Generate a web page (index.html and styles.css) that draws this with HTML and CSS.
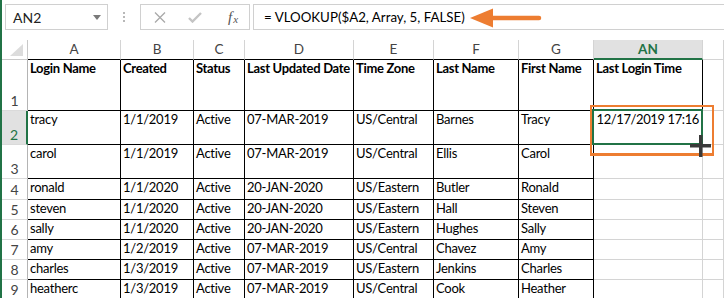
FILE: index.html
```html
<!DOCTYPE html>
<html lang="en">
<head>
<meta charset="utf-8">
<title>VLOOKUP</title>
<link rel="stylesheet" href="styles.css">
</head>
<body>
<div class="toolbar">
  <div class="namebox">
    <span class="nb-text">AN2</span>
    <svg class="nb-caret" width="8" height="5" viewBox="0 0 8 5"><path d="M0 0H8L4 5Z" fill="#7a7a7a"/></svg>
  </div>
  <div class="grip"><i></i><i></i><i></i></div>
  <div class="fbtns">
    <span class="fb"><svg width="12" height="11" viewBox="0 0 12 11"><path d="M1 0.5L11 10.5M11 0.5L1 10.5" stroke="#a9a9a9" stroke-width="1.3" fill="none"/></svg></span>
    <span class="fb"><svg width="14" height="11" viewBox="0 0 14 11"><path d="M1 6L4.5 9.5L13 1" stroke="#c4c4c4" stroke-width="2.4" fill="none"/></svg></span>
    <span class="fb fx">f<span class="fx-x">x</span></span>
  </div>
  <div class="formula">
    <span class="ftext">= VLOOKUP($A2, Array, 5, FALSE)</span>
    <svg class="arrow" width="72" height="20" viewBox="0 0 72 20"><path d="M0 10L23 0.5V19.5Z" fill="#ed7d31"/><path d="M21 10H69" stroke="#ed7d31" stroke-width="4.5" stroke-linecap="round"/></svg>
  </div>
</div>

<div class="sheet">
  <div class="corner"><svg class="tri" width="13" height="12" viewBox="0 0 13 12"><path d="M13 0V12H0Z" fill="#dcdcdc"/></svg></div>
  <div class="ch">A</div>
  <div class="ch">B</div>
  <div class="ch">C</div>
  <div class="ch">D</div>
  <div class="ch">E</div>
  <div class="ch">F</div>
  <div class="ch">G</div>
  <div class="ch ch-sel">AN</div>
  <div class="ch ch-end"></div>

  <div class="rh">1</div>
  <div class="c b">Login Name</div>
  <div class="c b">Created</div>
  <div class="c b">Status</div>
  <div class="c b">Last Updated Date</div>
  <div class="c b">Time Zone</div>
  <div class="c b">Last Name</div>
  <div class="c b">First Name</div>
  <div class="c b">Last Login Time</div>
  <div class="e"></div>

  <div class="rh rh-sel">2</div>
  <div class="c">tracy</div>
  <div class="c">1/1/2019</div>
  <div class="c">Active</div>
  <div class="c">07-MAR-2019</div>
  <div class="c">US/Central</div>
  <div class="c">Barnes</div>
  <div class="c">Tracy</div>
  <div class="e active">
    <span class="num">12/17/2019 17:16</span>
    <span class="selbox"></span>
    <span class="highlight"></span>
    <svg class="cursor" width="21" height="22" viewBox="0 0 21 22"><rect x="9" y="0" width="3.5" height="22" fill="#3a3a3a"/><rect x="0" y="9" width="21" height="3.5" fill="#3a3a3a"/></svg>
  </div>
  <div class="e"></div>

  <div class="rh">3</div>
  <div class="c">carol</div>
  <div class="c">1/1/2019</div>
  <div class="c">Active</div>
  <div class="c">07-MAR-2019</div>
  <div class="c">US/Central</div>
  <div class="c">Ellis</div>
  <div class="c">Carol</div>
  <div class="e"></div>
  <div class="e"></div>

  <div class="rh">4</div>
  <div class="c">ronald</div>
  <div class="c">1/1/2020</div>
  <div class="c">Active</div>
  <div class="c">20-JAN-2020</div>
  <div class="c">US/Eastern</div>
  <div class="c">Butler</div>
  <div class="c">Ronald</div>
  <div class="e"></div>
  <div class="e"></div>

  <div class="rh">5</div>
  <div class="c">steven</div>
  <div class="c">1/1/2020</div>
  <div class="c">Active</div>
  <div class="c">20-JAN-2020</div>
  <div class="c">US/Eastern</div>
  <div class="c">Hall</div>
  <div class="c">Steven</div>
  <div class="e"></div>
  <div class="e"></div>

  <div class="rh">6</div>
  <div class="c">sally</div>
  <div class="c">1/1/2020</div>
  <div class="c">Active</div>
  <div class="c">20-JAN-2020</div>
  <div class="c">US/Eastern</div>
  <div class="c">Hughes</div>
  <div class="c">Sally</div>
  <div class="e"></div>
  <div class="e"></div>

  <div class="rh">7</div>
  <div class="c">amy</div>
  <div class="c">1/2/2019</div>
  <div class="c">Active</div>
  <div class="c">07-MAR-2019</div>
  <div class="c">US/Central</div>
  <div class="c">Chavez</div>
  <div class="c">Amy</div>
  <div class="e"></div>
  <div class="e"></div>

  <div class="rh">8</div>
  <div class="c">charles</div>
  <div class="c">1/3/2019</div>
  <div class="c">Active</div>
  <div class="c">07-MAR-2019</div>
  <div class="c">US/Eastern</div>
  <div class="c">Jenkins</div>
  <div class="c">Charles</div>
  <div class="e"></div>
  <div class="e"></div>

  <div class="rh">9</div>
  <div class="c">heatherc</div>
  <div class="c">1/3/2019</div>
  <div class="c">Active</div>
  <div class="c">07-MAR-2019</div>
  <div class="c">US/Central</div>
  <div class="c">Cook</div>
  <div class="c">Heather</div>
  <div class="e"></div>
  <div class="e"></div>
</div>
</body>
</html>
```
FILE: styles.css
```css
* { box-sizing: border-box; }

html, body { height: 100%; }

body {
  margin: 0;
  border-left: 2px solid #217346;
  background: #fff;
  overflow: hidden;
  font-family: Lato, "Liberation Sans", sans-serif;
  color: #000;
}

/* ---------- formula bar ---------- */
.toolbar {
  display: flex;
  align-items: flex-start;
  height: 40px;
  padding-top: 4px;
}

.namebox {
  margin-left: 3px;
  width: 103px;
  height: 26px;
  border: 1px solid #d0d0d0;
  display: flex;
  align-items: center;
  justify-content: space-between;
  padding: 0 6px 0 7px;
  font-size: 14px;
  color: #222;
}

.nb-caret { margin-top: 1px; }

.grip {
  width: 32px;
  height: 26px;
  display: flex;
  flex-direction: column;
  align-items: center;
  justify-content: center;
  gap: 2px;
}

.grip i {
  display: block;
  width: 2px;
  height: 2px;
  background: #b8b8b8;
}

.fbtns {
  width: 110px;
  height: 26px;
  border: 1px solid #d0d0d0;
  display: flex;
  align-items: center;
}

.fb {
  width: 36px;
  display: flex;
  justify-content: center;
  align-items: center;
}

.fb:first-child { padding-left: 2px; }

.fx {
  font-family: "Liberation Serif", serif;
  font-style: italic;
  font-size: 15px;
  color: #555;
  padding-left: 4px;
}

.fx-x { font-size: 11px; margin-top: 4px; margin-left: 1px; }

.formula {
  flex: 1;
  margin-left: 3px;
  height: 26px;
  border: 1px solid #d0d0d0;
  border-right: none;
  display: flex;
  align-items: center;
  padding-left: 10px;
  font-size: 13.3px;
  color: #000;
}

.ftext { white-space: nowrap; }

.arrow { margin-left: 5px; margin-top: 1px; flex: none; }

/* ---------- sheet ---------- */
.sheet {
  display: grid;
  grid-template-columns: 26px 93px 73px 51px 109px 80px 85px 75px 109px 1fr;
  grid-template-rows: 20px 51px 34px 34px 21px 20px 20px 20px 20px 20px;
  font-size: 13px;
  line-height: 15px;
}

.sheet > div {
  border-right: 1px solid #d4d4d4;
  border-bottom: 1px solid #d4d4d4;
  white-space: nowrap;
  overflow: visible;
}

.corner {
  position: relative;
  border-right-color: #c8c8c8 !important;
  border-bottom-color: #c8c8c8 !important;
}

.tri { position: absolute; right: 4px; bottom: 3px; }

.ch {
  display: flex;
  align-items: center;
  justify-content: center;
  font-size: 13.5px;
  color: #444;
  border-bottom-color: #000 !important;
}

.ch-sel {
  background: #e1e1e1;
  color: #217346;
  font-weight: bold;
  border-bottom: 2px solid #217346 !important;
}

.ch-end { border-bottom-color: #d4d4d4 !important; }

.rh {
  display: flex;
  align-items: flex-end;
  justify-content: center;
  padding-bottom: 2px;
  font-size: 14px;
  color: #444;
  border-right-color: #b4b4b4 !important;
  border-bottom-color: #dadada !important;
}

.rh-sel {
  background: #e1e1e1;
  color: #217346;
  border-right: 2px solid #217346 !important;
}

.c {
  padding: 1px 0 0 2px;
  letter-spacing: -0.25px;
  border-right-color: #000 !important;
  border-bottom-color: #000 !important;
}

.c.b { font-weight: bold; letter-spacing: -0.3px; }

.e.active {
  position: relative;
  display: flex;
  justify-content: flex-end;
  padding: 1px 3px 0 0;
  letter-spacing: -0.4px;
}

.selbox {
  position: absolute;
  left: -2px;
  top: -2px;
  width: 111px;
  height: 36px;
  border: 2px solid #217346;
}

.highlight {
  position: absolute;
  left: -4px;
  top: -6px;
  width: 124px;
  height: 51px;
  border: 2px solid #ed7d31;
  border-bottom-width: 3px;
  z-index: 2;
}

.cursor {
  position: absolute;
  left: 96px;
  top: 24px;
  z-index: 3;
}
```
